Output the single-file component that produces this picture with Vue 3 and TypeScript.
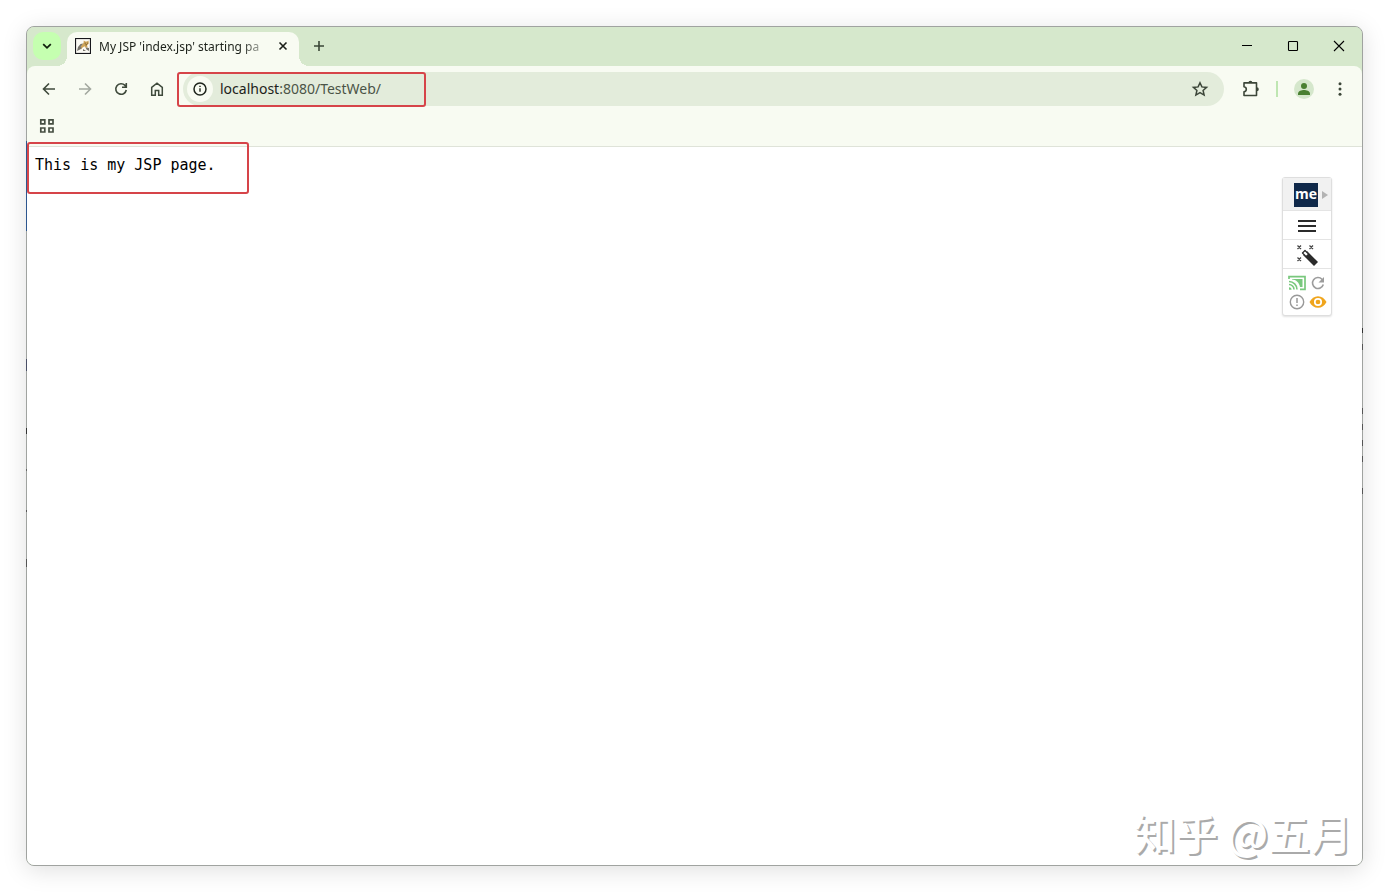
<script setup lang="ts">
import { ref } from 'vue'

const address = ref('localhost:8080/TestWeb/')
const pageTitle = "My JSP 'index.jsp' starting pa"
</script>

<template>
  <div class="desktop">
    <div class="window">
      <header class="titlebar">
        <button class="tab-search" aria-label="Search tabs">
          <svg width="12" height="12" viewBox="0 0 12 12"><path d="M2.2 4.2 6 7.800l3.800-3.600" fill="none" stroke="#10200c" stroke-width="1.800" /></svg>
        </button>
        <div class="tab">
          <svg class="favicon" width="16" height="16" viewBox="0 0 16 16">
            <rect x=".5" y=".5" width="15" height="15" fill="#fbfaf4" stroke="#17171c" stroke-width="1.200" />
            <path d="M4.500 10 7 6.500 8.500 5l.3-2.600 1.500 1.200h1.700L13.500 2.400l.3 3.200-1.800 2 .8 2-2 .2-1.300-1.600L7 10l-1 1.500z" fill="#cfa558" />
            <path d="M2 13 3 9l2.500-3L8 5.500 5.500 9 7 10l-2 1.500zM10.500 9.500l3.500.5v3l-2.500-1.500zM8 11l3 2H8z" fill="#77746c" />
            <path d="M9.700 5.200h1M12 5.200h.8M10.500 6.800h1.500" stroke="#4d3e20" stroke-width=".8" />
          </svg>
          <span class="tab-title">{{ pageTitle }}</span>
          <button class="tab-close" aria-label="Close tab">
            <svg width="16" height="16" viewBox="0 0 16 16"><path d="m4.500 4.500 7 7m0-7-7 7" stroke="#1b1f19" stroke-width="1.600" /></svg>
          </button>
        </div>
        <button class="new-tab" aria-label="New tab">
          <svg width="12" height="12" viewBox="0 0 12 12"><path d="M6 1v10M1 6h10" stroke="#3a4636" stroke-width="1.600" /></svg>
        </button>
        <div class="controls">
          <button aria-label="Minimize"><svg width="12" height="12" viewBox="0 0 12 12"><path d="M1 5.500h10" stroke="#000" /></svg></button>
          <button aria-label="Maximize"><svg width="12" height="12" viewBox="0 0 12 12"><rect x="1.500" y="1.500" width="9" height="9" rx=".8" fill="none" stroke="#000" stroke-width="1.100" /></svg></button>
          <button aria-label="Close"><svg width="12" height="12" viewBox="0 0 12 12"><path d="m1 1 10 10M11 1 1 11" stroke="#000" stroke-width="1.100" /></svg></button>
        </div>
      </header>

      <div class="chrome">
        <div class="toolbar">
          <button aria-label="Back"><svg width="16" height="16" viewBox="0 0 16 16"><path d="M14 8H3M8 2.500 2.500 8 8 13.500" fill="none" stroke="#3f4a3c" stroke-width="1.600" /></svg></button>
          <button aria-label="Forward" disabled><svg width="16" height="16" viewBox="0 0 16 16"><path d="M2 8h11M8 2.500 13.500 8 8 13.500" fill="none" stroke="#a3a9a0" stroke-width="1.600" /></svg></button>
          <button aria-label="Reload"><svg width="16" height="16" viewBox="0 0 16 16"><path d="M13.300 9A5.300 5.300 0 1 1 12 4.400L13.300 6M13.300 2v4.300H9" fill="none" stroke="#3f4a3c" stroke-width="1.600" /></svg></button>
          <button aria-label="Home"><svg width="16" height="16" viewBox="0 0 16 16"><path d="M2.700 6.300 8 2.100l5.300 4.200v7.900H9.700V9.400H6.300v4.800H2.700z" fill="none" stroke="#3f4a3c" stroke-width="1.500" /></svg></button>
          <div class="omnibox">
            <button class="site-info" aria-label="View site information">
              <svg width="16" height="16" viewBox="0 0 16 16"><circle cx="8" cy="8" r="6" fill="none" stroke="#1e241c" stroke-width="1.500" /><path d="M8 7.300v3.500M8 4.700v1.400" stroke="#1e241c" stroke-width="1.400" /></svg>
            </button>
            <label class="address">
              <input v-model="address" type="text" aria-label="Address" spellcheck="false" />
              <span class="address-text" aria-hidden="true"><b>localhost</b>:8080/TestWeb/</span>
            </label>
            <button class="bookmark" aria-label="Bookmark this tab">
              <svg width="18" height="18" viewBox="0 0 18 18"><path d="m9 2.700 1.900 4.200 4.700.5-3.500 3.100 1 4.600L9 12.700l-4.100 2.400 1-4.600-3.500-3.100 4.700-.5z" fill="none" stroke="#3c4639" stroke-width="1.500" /></svg>
            </button>
            <span class="mark mark-address"></span>
          </div>
          <button aria-label="Extensions">
            <svg width="18" height="18" viewBox="0 0 18 18"><path d="M2 2.900h12.500v12.600H2v-3.800Q4.300 11.300 4.300 9.200T2 6.700z" fill="none" stroke="#3c4639" stroke-width="1.600" stroke-linejoin="round" /><path d="M6.400 2.700a2 2 0 0 1 4 0M14.800 7.200a2 2 0 0 1 0 4" fill="#3c4639" /></svg>
          </button>
          <span class="separator"></span>
          <button aria-label="Profile">
            <svg width="20" height="20" viewBox="0 0 20 20"><circle cx="10" cy="10" r="10" fill="#d5e7cc" /><circle cx="10" cy="7" r="3" fill="#4a8032" /><path d="M4 16v-1.500c0-2.400 3.800-3.500 6-3.500s6 1.100 6 3.500V16z" fill="#4a8032" /></svg>
          </button>
          <button aria-label="Menu"><svg width="16" height="16" viewBox="0 0 16 16"><circle cx="8" cy="2.700" r="1.500" fill="#3c4639" /><circle cx="8" cy="8" r="1.500" fill="#3c4639" /><circle cx="8" cy="13.300" r="1.500" fill="#3c4639" /></svg></button>
        </div>
        <nav class="bookmarks">
          <button aria-label="Apps"><svg width="16" height="16" viewBox="0 0 16 16"><path d="M1.800 1.800h4v4h-4zM10 1.800h4v4h-4zM1.800 10h4v4h-4zM10 10h4v4h-4z" fill="none" stroke="#454e42" stroke-width="1.700" /></svg></button>
        </nav>
      </div>

      <main class="page">
        <p class="message">This is my JSP page.</p>
        <span class="edge edge-accent"></span>
        <span class="edge edge-left"></span>
        <span class="edge edge-right"></span>
        <span class="mark mark-message"></span>

        <aside class="panel">
          <button class="panel-head" aria-label="MyEclipse">
            <span class="logo">me</span>
            <svg width="6" height="8" viewBox="0 0 6 8"><path d="M0 0v8l6-4z" fill="#b3b3b3" /></svg>
          </button>
          <button class="panel-row" aria-label="Menu"><svg width="18" height="14" viewBox="0 0 18 14"><path d="M0 2h18M0 7h18M0 12h18" stroke="#2b2b2b" stroke-width="2" /></svg></button>
          <button class="panel-row" aria-label="Magic wand">
            <svg width="22" height="22" viewBox="0 0 22 22"><path d="m1.500 1.500 3.500 3.500m0-3.500L1.500 5m12-3.500L17 5m0-3.500L13.500 5m-12 8.500L5 17m0-3.500L1.500 17" stroke="#444" stroke-width="1.300" /><path d="m9 9 11 11" stroke="#2b2b2b" stroke-width="5.600" /><path d="m6.500 9 2.500-2.500 3.600 3.600-2.500 2.500z" fill="#fff" stroke="#2b2b2b" stroke-width="1.300" stroke-linejoin="round" /></svg>
          </button>
          <div class="panel-grid">
            <button aria-label="Live preview"><svg width="18" height="16" viewBox="0 0 18 16"><path d="M1 4V1.700h16v12.600h-5" fill="none" stroke="#79c87d" stroke-width="1.700" /><path d="M4 4h10.500v8H12C11.500 8 8 4.500 4 4.500z" fill="#79c87d" /><path d="M1 6.500a8 8 0 0 1 8 8M1 9.500a5 5 0 0 1 5 5" fill="none" stroke="#79c87d" stroke-width="1.600" /><path d="M1 12.200a2.500 2.500 0 0 1 2.500 2.600H1z" fill="#79c87d" /></svg></button>
            <button aria-label="Refresh"><svg width="14" height="14" viewBox="0 0 14 14"><path d="M12.300 8.500A5.500 5.500 0 1 1 11 3.200l1 1" fill="none" stroke="#9c9c9c" stroke-width="1.600" /><path d="M13 1v5.500H7.500z" fill="#9c9c9c" /></svg></button>
            <button aria-label="Problems"><svg width="16" height="16" viewBox="0 0 16 16"><circle cx="8" cy="8" r="6.700" fill="none" stroke="#999" stroke-width="1.400" /><path d="M8 4v5M8 10.500V12" stroke="#999" stroke-width="1.500" /></svg></button>
            <button aria-label="Visibility"><svg width="18" height="14" viewBox="0 0 18 14"><path d="M.5 7C2.300 3.400 5.500 1.200 9 1.200S15.700 3.400 17.500 7C15.700 10.600 12.500 12.800 9 12.800S2.300 10.600.5 7z" fill="#f0a51c" /><circle cx="9" cy="7" r="3.200" fill="#f0a51c" stroke="#fff" stroke-width="1.700" /></svg></button>
          </div>
        </aside>
        <div class="watermark">知乎 @五月</div>
      </main>
    </div>
  </div>
</template>

<style>
body {
  margin: 0;
  background: #fff;
}
</style>

<style scoped>
* {
  box-sizing: border-box;
}
.desktop {
  display: flex;
  min-height: 100vh;
  padding: 26px;
  overflow: hidden;
  font-family: "Noto Sans", "Noto Sans CJK SC", sans-serif;
}
button {
  display: flex;
  align-items: center;
  justify-content: center;
  padding: 0;
  border: 0;
  background: transparent;
}
svg {
  display: block;
  flex: none;
}
.window {
  display: flex;
  flex: 1;
  flex-direction: column;
  min-width: 0;
  border: 1px solid #a0a3a0;
  border-radius: 8px;
  background: #d6e8cc;
  box-shadow: 0 4px 24px rgba(0, 0, 0, 0.13);
}
.titlebar {
  display: flex;
  align-items: flex-end;
  height: 39px;
  border-radius: 7px 7px 0 0;
  background: #d6e8cc;
}
.tab-search {
  width: 28px;
  height: 28px;
  margin: 0 6px 6px;
  border-radius: 10px;
  background: #c5ffb0;
}
.tab {
  position: relative;
  display: flex;
  align-items: center;
  gap: 8px;
  width: 232px;
  height: 34px;
  padding: 0 8px 6px;
  border-radius: 10px 10px 0 0;
  background: #f8fbf2;
}
.tab::before,
.tab::after {
  content: "";
  position: absolute;
  bottom: 0;
  width: 10px;
  height: 10px;
}
.tab::before {
  right: 100%;
  background: radial-gradient(circle at 0 0, transparent 10px, #f8fbf2 10px);
}
.tab::after {
  left: 100%;
  background: radial-gradient(circle at 100% 0, transparent 10px, #f8fbf2 10px);
}
.tab-title {
  flex: 1;
  padding-top: 2px;
  color: #1c211a;
  font-size: 12px;
  line-height: 20px;
  white-space: nowrap;
  mask-image: linear-gradient(90deg, #000 84%, rgba(0, 0, 0, 0.2));
}
.tab-close {
  width: 16px;
  height: 16px;
}
.new-tab {
  width: 28px;
  height: 28px;
  margin: 0 0 6px 6px;
}
.controls {
  display: flex;
  align-self: stretch;
  margin-left: auto;
}
.controls button {
  width: 46px;
  height: 38px;
}
.chrome {
  border-bottom: 1px solid #dfe3d9;
  border-radius: 8px 8px 0 0;
  background: #f8fbf2;
}
.toolbar {
  display: flex;
  align-items: center;
  height: 46px;
  padding: 0 4px;
}
.toolbar > button {
  width: 36px;
  height: 36px;
}
.omnibox {
  position: relative;
  display: flex;
  flex: 1;
  align-items: center;
  height: 34px;
  margin: 0 9px 0 8px;
  padding: 0 12px 0 4px;
  border-radius: 17px;
  background: #e3ecdb;
}
.site-info {
  width: 26px;
  height: 26px;
  border-radius: 13px;
  background: #f8fbf2;
}
.address {
  position: relative;
  flex: 1;
  margin-left: 7px;
  font-size: 14px;
  line-height: 20px;
}
.address input {
  display: block;
  width: 100%;
  height: 20px;
  padding: 0;
  border: 0;
  outline: 0;
  background: transparent;
  color: transparent;
  font: inherit;
}
.address-text {
  position: absolute;
  inset: 0;
  color: #4b5447;
  pointer-events: none;
}
.address-text b {
  color: #1c221a;
  font-weight: 400;
}
.bookmark {
  width: 24px;
  height: 24px;
}
.separator {
  width: 2px;
  height: 16px;
  margin: 0 8px 0 7px;
  background: #bfe6b2;
}
.bookmarks {
  display: flex;
  height: 34px;
  padding: 0 8px;
}
.bookmarks button {
  width: 24px;
  height: 28px;
}
.mark {
  position: absolute;
  border: 2px solid #d64449;
  border-radius: 3px;
  pointer-events: none;
}
.mark-address {
  top: 0;
  left: -6px;
  width: 249px;
  height: 35px;
}
.mark-message {
  top: -5px;
  left: 0;
  width: 222px;
  height: 52px;
}
.page {
  position: relative;
  flex: 1;
  border-radius: 0 0 7px 7px;
  background: #fff;
}
.edge {
  position: absolute;
  width: 1px;
}
.edge-accent {
  top: -6px;
  left: -1px;
  height: 90px;
  background: #2c568f;
}
.edge-left {
  top: 212px;
  left: -1px;
  height: 360px;
  background:
    linear-gradient(#4a4f66, #4a4f66) 0 0 / 1px 12px no-repeat,
    linear-gradient(#333, #333) 0 69px / 1px 6px no-repeat,
    linear-gradient(#666, #666) 0 110px / 1px 2px no-repeat,
    linear-gradient(#555, #555) 0 151px / 1px 2px no-repeat,
    linear-gradient(#555, #555) 0 200px / 1px 8px no-repeat;
}
.edge-right {
  top: 181px;
  right: -1px;
  height: 360px;
  background:
    linear-gradient(#333, #333) 0 0 / 1px 5px no-repeat,
    linear-gradient(#555, #555) 0 16px / 1px 6px no-repeat,
    linear-gradient(#555, #555) 0 80px / 1px 6px no-repeat,
    linear-gradient(#555, #555) 0 96px / 1px 6px no-repeat,
    linear-gradient(#555, #555) 0 112px / 1px 6px no-repeat,
    linear-gradient(#555, #555) 0 128px / 1px 6px no-repeat,
    linear-gradient(#555, #555) 0 160px / 1px 6px no-repeat;
}
.message {
  margin: 0;
  padding: 8px;
  color: #000;
  font-family: "DejaVu Sans Mono", monospace;
  font-size: 15px;
  line-height: 20px;
}
.panel {
  position: absolute;
  top: 30px;
  right: 30px;
  width: 50px;
  border: 1px solid #dedede;
  border-radius: 3px;
  background: #fff;
  box-shadow: 0 1px 2px rgba(0, 0, 0, 0.12);
}
.panel-head {
  gap: 4px;
  width: 100%;
  height: 32px;
  padding: 2px 0 0 8px;
  background: #f1f1f1;
}
.logo {
  width: 24px;
  height: 24px;
  background: #10294a;
  color: #fff;
  font-family: "Open Sans", sans-serif;
  font-size: 14px;
  font-weight: 700;
  line-height: 22px;
}
.panel-row {
  width: 100%;
  height: 29px;
  padding-top: 2px;
  border-top: 1px solid #e4e4e4;
}
.panel-grid {
  display: grid;
  grid-template-columns: 20px 20px;
  grid-auto-rows: 19px;
  column-gap: 1px;
  justify-content: center;
  padding: 4px 0;
  border-top: 1px solid #e4e4e4;
}
.watermark {
  position: absolute;
  right: 10px;
  bottom: 5px;
  color: #fff;
  font-family: "Noto Sans CJK SC", sans-serif;
  font-size: 42px;
  font-weight: 500;
  line-height: 56px;
  text-shadow: 2px 2px 0 #aaa;
}
</style>
